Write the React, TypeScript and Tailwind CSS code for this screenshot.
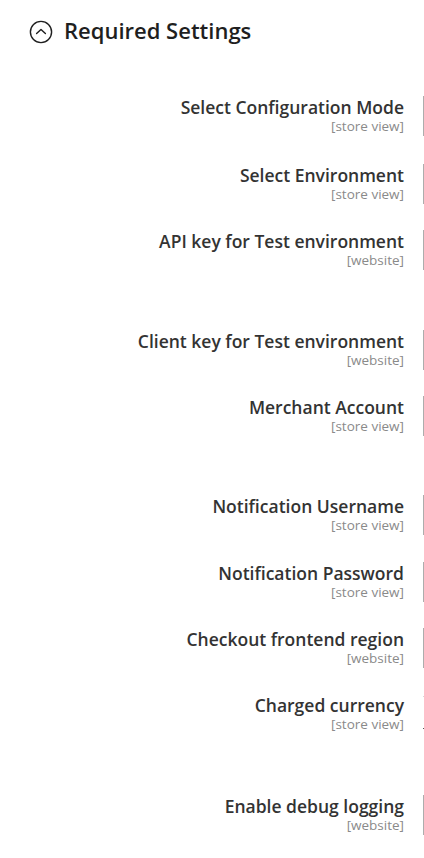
import React from "react";

type Row = { label: string; scope: string; h: string; control: "line" | "dots" };

const rows: Row[] = [
  { label: "Select Configuration Mode", scope: "[store view]", h: "h-[68px]", control: "line" },
  { label: "Select Environment", scope: "[store view]", h: "h-[66px]", control: "line" },
  { label: "API key for Test environment", scope: "[website]", h: "h-[100px]", control: "line" },
  { label: "Client key for Test environment", scope: "[website]", h: "h-[66px]", control: "line" },
  { label: "Merchant Account", scope: "[store view]", h: "h-[99px]", control: "line" },
  { label: "Notification Username", scope: "[store view]", h: "h-[67px]", control: "line" },
  { label: "Notification Password", scope: "[store view]", h: "h-[66px]", control: "line" },
  { label: "Checkout frontend region", scope: "[website]", h: "h-[66px]", control: "line" },
  { label: "Charged currency", scope: "[store view]", h: "h-[101px]", control: "dots" },
  { label: "Enable debug logging", scope: "[website]", h: "h-[66px]", control: "line" },
];

function CollapseIcon() {
  return (
    <svg width="24" height="24" viewBox="0 0 24 24" fill="none" className="shrink-0">
      <circle cx="12" cy="12" r="10.6" stroke="#1f1f1f" strokeWidth="1.4" />
      <path d="M7.6 13.6 L12 9.4 L16.4 13.6" stroke="#1f1f1f" strokeWidth="1.4" strokeLinecap="round" strokeLinejoin="round" />
    </svg>
  );
}

export default function App() {
  return (
    <div
      className="w-[424px] h-[858px] overflow-hidden bg-white text-[#303030]"
      style={{ fontFamily: '"Open Sans", "Liberation Sans", sans-serif' }}
    >
      {/* Section header */}
      <div className="flex items-center gap-[11px] pl-[29px] pt-[19px] h-[45px]">
        <CollapseIcon />
        <h2 className="text-[22px] leading-[26px] font-semibold text-[#1f1f1f] -mt-[4px]">
          Required Settings
        </h2>
      </div>

      <div className="mt-[51px]">
        {rows.map((r) => (
          <div key={r.label} className={`flex items-start ${r.h}`}>
            <div className="w-[404px] shrink-0 text-right">
              <div className="text-[17.5px] leading-[22px] font-semibold text-[#333333] whitespace-nowrap">
                {r.label}
              </div>
              <div className="text-[13.5px] leading-[16px] text-[#8a8a8a]">{r.scope}</div>
            </div>
            <div className="ml-[19px] flex-1">
              {r.control === "line" ? (
                <div className="h-[40px] border-l border-[#adadad]" />
              ) : (
                <div className="relative h-[40px]">
                  <div className="absolute left-0 top-[2px] w-px h-px bg-[#d8d8d8]" />
                  <div className="absolute left-0 top-[34px] w-px h-px bg-[#555555]" />
                </div>
              )}
            </div>
          </div>
        ))}
      </div>
    </div>
  );
}
